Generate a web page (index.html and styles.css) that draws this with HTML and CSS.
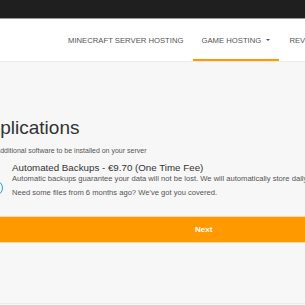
FILE: index.html
```html
<!DOCTYPE html>
<html>
<head>
<meta charset="utf-8">
<link rel="stylesheet" href="styles.css">
</head>
<body>
<div class="topbar"></div>
<header class="navbar">
  <ul class="menu">
    <li class="menu-item"><a>MINECRAFT SERVER HOSTING</a></li>
    <li class="menu-item active"><a>GAME HOSTING <span class="caret"></span></a></li>
    <li class="menu-item"><a>REVIEWS</a></li>
  </ul>
</header>
<main class="content">
  <h1 class="title">Applications</h1>
  <p class="subtitle">Additional software to be installed on your server</p>
  <div class="option">
    <div class="option-icon"><span class="ring"></span></div>
    <div class="option-body">
      <div class="option-name">Automated Backups - €9.70 (One Time Fee)</div>
      <p class="option-desc">Automatic backups guarantee your data will not be lost. We will automatically store daily backups of your server.<br>Need some files from 6 months ago? We've got you covered.</p>
    </div>
  </div>
  <div class="next-bar"><span class="next-label">Next</span></div>
</main>
<div class="bottom-line"></div>
</body>
</html>
```

FILE: styles.css
```css
html, body {
  margin: 0;
  padding: 0;
}
body {
  width: 305px;
  height: 305px;
  overflow: hidden;
  background: #f7f7f7;
  font-family: "Liberation Sans", Arial, sans-serif;
  display: flex;
  flex-direction: column;
}
.topbar {
  height: 18px;
  background: #1f1f1f;
  border-bottom: 1px solid #9a9a9a;
  flex: none;
}
.navbar {
  height: 42px;
  background: #fff;
  border-bottom: 1px solid #eaeaea;
  flex: none;
  overflow: hidden;
}
.menu {
  list-style: none;
  margin: 0;
  padding: 0 0 0 58px;
  display: flex;
  height: 100%;
  white-space: nowrap;
}
.menu-item {
  padding: 0 10px;
  height: 100%;
  display: flex;
  align-items: center;
  border-bottom: 2px solid transparent;
  box-sizing: border-box;
  padding-top: 2px;
}
.menu-item a {
  font-size: 7.7px;
  color: #555;
}
.menu-item.active {
  border-bottom-color: #ff9900;
  padding-left: 8px;
  padding-right: 9px;
}
.caret {
  display: inline-block;
  width: 0;
  height: 0;
  border-left: 2.5px solid transparent;
  border-right: 2.5px solid transparent;
  border-top: 2.5px solid #555;
  vertical-align: middle;
  margin-left: 3px;
}
.content {
  flex: 1;
}
.title {
  margin: 55px 0 0 -23px;
  font-family: "Liberation Sans", Arial, sans-serif;
  font-weight: normal;
  font-size: 19px;
  line-height: 22px;
  color: #333;
}
.subtitle {
  margin: 7px 0 0 -4.5px;
  font-size: 7px;
  line-height: 10px;
  color: #555;
}
.option {
  display: flex;
  margin-top: 5px;
}
.option-icon {
  width: 12px;
  flex: none;
  position: relative;
}
.ring {
  position: absolute;
  left: -13px;
  top: 19px;
  width: 14px;
  height: 14px;
  border: 1.6px solid #2d9ee0;
  border-radius: 50%;
}
.option-body {
  white-space: nowrap;
}
.option-name {
  font-size: 9.75px;
  line-height: 14px;
  color: #333;
}
.option-desc {
  margin: -3px 0 0;
  font-size: 7.6px;
  line-height: 14px;
  color: #555;
}
.next-bar {
  margin-top: 16px;
  height: 25px;
  background: #ff9900;
  border-top: 1px solid #f8d8a6;
  border-bottom: 1px solid #f8d8a6;
  display: flex;
  align-items: center;
  padding-left: 195px;
}
.next-label {
  color: #fff;
  font-weight: bold;
  font-size: 8px;
}
.bottom-line {
  height: 1px;
  background: #ececec;
  margin-bottom: 1px;
  flex: none;
}
```
